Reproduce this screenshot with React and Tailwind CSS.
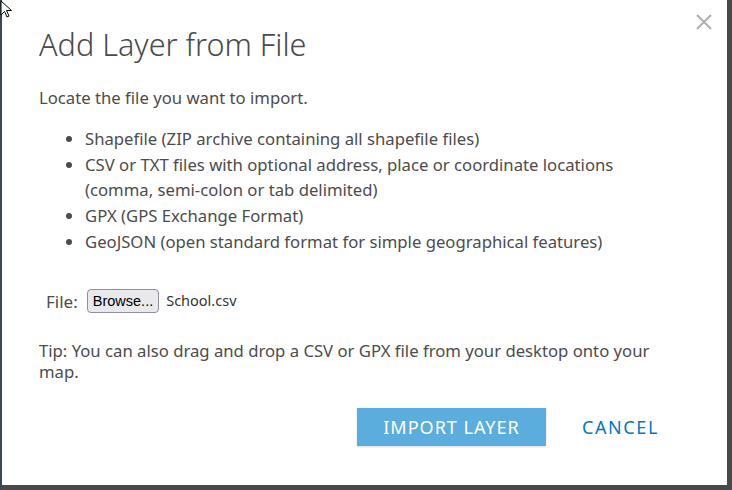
import React from "react";

export default function App() {
  const items = [
    "Shapefile (ZIP archive containing all shapefile files)",
    "CSV or TXT files with optional address, place or coordinate locations (comma, semi-colon or tab delimited)",
    "GPX (GPS Exchange Format)",
    "GeoJSON (open standard format for simple geographical features)",
  ];
  return (
    <div className="relative w-[732px] h-[490px] overflow-hidden bg-[#474a49] flex" style={{ fontFamily: "'Noto Sans', Lato, sans-serif" }}>
      <div className="w-[2px] h-full bg-[#3a4851]" />
      <div className="relative w-[725px] h-[485px] bg-white flex flex-col pl-[37px] pr-[58px]">
        <button className="absolute right-[14px] top-[13px] w-[18px] h-[18px] text-[#b0b0b0]">
          <svg viewBox="0 0 18 18" width="18" height="18">
            <path d="M2 2 L16 16 M16 2 L2 16" stroke="currentColor" strokeWidth="2" fill="none" />
          </svg>
        </button>
        <h1 className="mt-[24px] text-[30.6px] font-light leading-[40px] text-[#4a4a4a]">Add Layer from File</h1>
        <p className="mt-[23px] text-[16.7px] leading-[22px] text-[#4c4c4c]">Locate the file you want to import.</p>
        <ul className="mt-[17px] ml-[36px] list-disc pl-[10px] text-[16.7px] leading-[25.7px] text-[#4c4c4c]">
          {items.map((t) => (
            <li key={t} className="pl-0">{t}</li>
          ))}
        </ul>
        <div className="mt-[34px] flex items-center ml-[7px] text-[#4c4c4c]">
          <span className="text-[17px]">File:</span>
          <button className="ml-[9px] h-[24px] px-[5px] border border-[#8f8f9d] rounded-[4px] bg-[#e9e9ed] text-[14.5px] leading-[20px] text-black" style={{ fontFamily: "'Liberation Sans', Arial, sans-serif" }}>Browse...</button>
          <span className="ml-[7px] text-[14.5px] text-[#333]">School.csv</span>
        </div>
        <p className="mt-[26px] text-[16.7px] leading-[21px] text-[#4c4c4c]">Tip: You can also drag and drop a CSV or GPX file from your desktop onto your map.</p>
        <div className="mt-[26px] flex items-center justify-end pr-[10px]">
          <button className="w-[189px] h-[38px] bg-[#5aaddd] text-white text-[18px] tracking-[1px] shadow-[0_1px_2px_rgba(0,0,0,0.15)]">IMPORT LAYER</button>
          <button className="ml-[36px] text-[#0079c1] text-[18px] tracking-[1.6px]">CANCEL</button>
        </div>
      </div>
      <svg className="absolute left-0 top-0" width="16" height="20" viewBox="0 0 16 20">
        <path d="M1 1 L1 15 L4.5 11.5 L7 17 L9 16 L6.5 10.5 L11.5 10.5 Z" fill="white" stroke="black" strokeWidth="1" />
      </svg>
    </div>
  );
}
